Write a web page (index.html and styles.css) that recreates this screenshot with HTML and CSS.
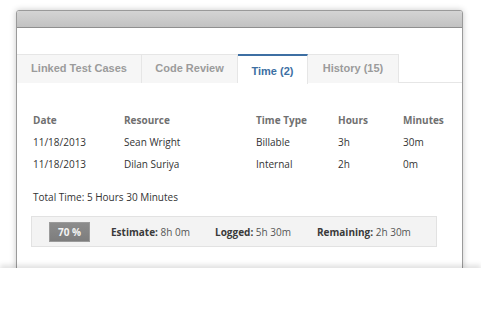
FILE: index.html
```html
<!DOCTYPE html>
<html>
<head>
<meta charset="utf-8">
<link rel="stylesheet" href="styles.css">
</head>
<body>
<div class="stage">
  <div class="window">
    <div class="titlebar"></div>
    <div class="content">
      <div class="tabs">
        <div class="tab tab-linked">Linked Test Cases</div>
        <div class="tab tab-code">Code Review</div>
        <div class="tab tab-time active">Time (2)</div>
        <div class="tab tab-history">History (15)</div>
      </div>
      <div class="pane">
        <div class="grid">
          <div class="th">Date</div>
          <div class="th">Resource</div>
          <div class="th">Time Type</div>
          <div class="th">Hours</div>
          <div class="th">Minutes</div>
          <div class="td">11/18/2013</div>
          <div class="td">Sean Wright</div>
          <div class="td">Billable</div>
          <div class="td">3h</div>
          <div class="td">30m</div>
          <div class="td">11/18/2013</div>
          <div class="td">Dilan Suriya</div>
          <div class="td">Internal</div>
          <div class="td">2h</div>
          <div class="td">0m</div>
        </div>
        <div class="total">Total Time: 5 Hours 30 Minutes</div>
        <div class="summary">
          <div class="badge">70 %</div>
          <div class="stat stat-est"><b>Estimate:</b> 8h 0m</div>
          <div class="stat stat-log"><b>Logged:</b> 5h 30m</div>
          <div class="stat"><b>Remaining:</b> 2h 30m</div>
        </div>
      </div>
    </div>
  </div>
  <div class="cover"></div>
</div>
</body>
</html>
```
FILE: styles.css
```css
html, body {
  margin: 0;
  padding: 0;
  background: #ffffff;
}
.stage {
  width: 481px;
  height: 327px;
  overflow: hidden;
  padding-top: 10px;
  box-sizing: border-box;
}
.window {
  margin-left: 16px;
  width: 447px;
  box-sizing: border-box;
  border: 1px solid #9a9a9a;
  border-radius: 3px 3px 0 0;
  box-shadow: 0 0 6px rgba(0,0,0,0.22);
  background: #ffffff;
}
.titlebar {
  height: 16px;
  background: linear-gradient(#d4d4d4, #c2c2c2);
  border-bottom: 1px solid #8f8f8f;
  border-radius: 2px 2px 0 0;
}
.content {
  padding-top: 26px;
  height: 240px;
  box-sizing: border-box;
}
.tabs {
  display: flex;
  border-bottom: 1px solid #e6e6e6;
  height: 29px;
  box-sizing: border-box;
}
.tab {
  font-family: "Liberation Sans", Arial, sans-serif;
  font-weight: bold;
  font-size: 11px;
  color: #9b9b9b;
  background: #f6f6f6;
  border: 1px solid #e6e6e6;
  border-bottom: none;
  border-left: none;
  height: 29px;
  box-sizing: border-box;
  display: flex;
  align-items: center;
  justify-content: center;
  padding-bottom: 2px;
}
.tab-linked { width: 125px; }
.tab-code { width: 96px; }
.tab-time { width: 70px; }
.tab-history { width: 91px; }
.tab.active {
  background: #ffffff;
  color: #3d6fa3;
  border-top: 2px solid #3d6fa3;
  height: 30px;
  margin-bottom: -1px;
  padding-bottom: 0;
  padding-top: 1px;
}
.pane {
  padding: 26px 14px 0 16px;
  font-family: "Open Sans", "Noto Sans", sans-serif;
  font-size: 10px;
  color: #333333;
}
.grid {
  display: grid;
  grid-template-columns: 91px 132px 82px 65px auto;
  grid-auto-rows: 22px;
  align-items: center;
}
.th {
  font-weight: bold;
  color: #707070;
}
.total {
  margin-top: 16px;
  line-height: 12px;
}
.summary {
  margin-top: 13px;
  margin-left: -2px;
  margin-right: 11px;
  height: 31px;
  box-sizing: border-box;
  background: #f3f3f3;
  border: 1px solid #e2e2e2;
  display: flex;
  align-items: center;
  padding-left: 17px;
  color: #555555;
}
.summary b {
  color: #3a3a3a;
}
.badge {
  width: 41px;
  height: 20px;
  box-sizing: border-box;
  background: linear-gradient(#8c8c8c, #7d7d7d);
  border: 1px solid #9b9b9b;
  color: #f4f4f4;
  font-weight: bold;
  display: flex;
  align-items: center;
  justify-content: center;
  margin-right: 21px;
}
.stat-est { width: 104px; }
.stat-log { width: 102px; }
.cover {
  position: relative;
  z-index: 2;
  height: 80px;
  margin-top: -1px;
  background: #ffffff;
  box-shadow: 0 -3px 5px rgba(0,0,0,0.12);
}
```
